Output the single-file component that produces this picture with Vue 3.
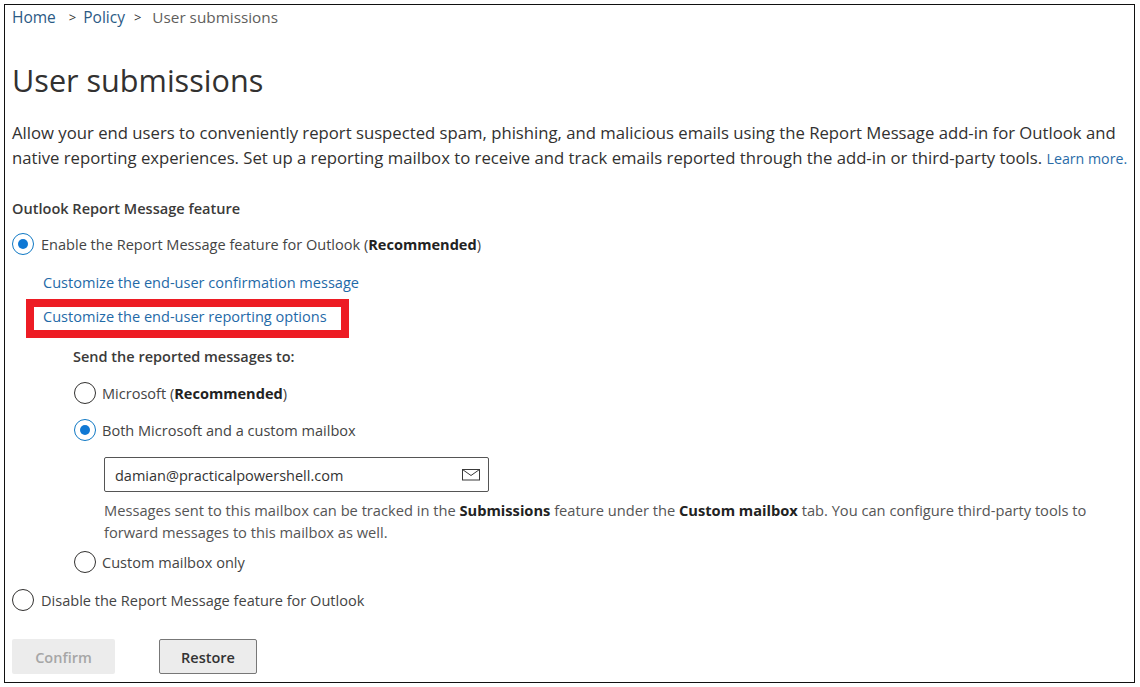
<script setup>
const intro = 'Allow your end users to conveniently report suspected spam, phishing, and malicious emails using the Report Message add-in for Outlook and native reporting experiences. Set up a reporting mailbox to receive and track emails reported through the add-in or third-party tools.'
</script>

<template>
  <div class="frame">
    <nav class="crumbs">
      <span class="crumb">Home</span><span class="sep first">&gt;</span><span class="crumb">Policy</span><span class="sep">&gt;</span><span class="current">User submissions</span>
    </nav>
    <h1 class="title">User submissions</h1>
    <p class="intro">{{ intro }} <a class="learn">Learn more.</a></p>
    <div class="section">Outlook Report Message feature</div>

    <label class="radio top"><span class="dot on"></span><span>Enable the Report Message feature for Outlook (<b>Recommended</b>)</span></label>
    <a class="link confirm-link">Customize the end-user confirmation message</a>
    <div class="red"><a class="link">Customize the end-user reporting options</a></div>

    <div class="nested">
      <div class="send">Send the reported messages to:</div>
      <label class="radio sub r1"><span class="dot"></span><span>Microsoft (<b>Recommended</b>)</span></label>
      <label class="radio sub r2"><span class="dot on"></span><span>Both Microsoft and a custom mailbox</span></label>
      <div class="mailbox">
        <div class="input">
          <span class="email">damian@practicalpowershell.com</span>
          <svg width="18" height="12" viewBox="0 0 18 12" fill="none" stroke="#3a3a3a" stroke-width="1"><rect x="0.5" y="0.5" width="17" height="10.5"/><path d="M0.5 0.5 9 6.5 17.5 0.5"/></svg>
        </div>
        <p class="hint">Messages sent to this mailbox can be tracked in the <b>Submissions</b> feature under the <b>Custom mailbox</b> tab. You can configure third-party tools to forward messages to this mailbox as well.</p>
      </div>
      <label class="radio sub r3"><span class="dot"></span><span>Custom mailbox only</span></label>
    </div>
    <label class="radio r4"><span class="dot"></span><span>Disable the Report Message feature for Outlook</span></label>

    <div class="actions">
      <button class="btn disabled">Confirm</button>
      <button class="btn restore">Restore</button>
    </div>
  </div>
</template>

<style>
html, body { margin: 0; background: #fff; }
</style>

<style scoped>
.frame {
  box-sizing: border-box;
  width: 1131px;
  height: 679px;
  margin: 4px 0 0 4px;
  border: 1px solid #111;
  padding: 0 0 0 7px;
  font-family: "Open Sans", "Noto Sans", sans-serif;
  font-size: 14.5px;
  color: #3b3a39;
  overflow: hidden;
}
.crumbs { display: flex; align-items: center; height: 24px; font-size: 15.5px; }
.crumb { color: #2b5a85; }
.sep { margin: 0 8px 0 9px; font-size: 13px; color: #333; }
.sep.first { margin-left: 13px; margin-right: 7px; }
.current { color: #605e5c; margin-left: 3px; font-size: 15.3px; }
.title { margin: 30px 0 0; font-size: 30.6px; line-height: 42px; font-weight: 400; color: #323130; }
.intro { margin: 19px 0 0; width: 1122px; font-size: 16.72px; line-height: 25px; color: #323130; }
.learn { font-size: 14.2px; color: #2a6ca8; }
.section { margin-top: 27px; height: 20px; line-height: 20px; font-weight: 600; font-size: 14.55px; }
.radio { display: flex; align-items: center; gap: 7px; height: 24px; font-size: 14.55px; color: #444; }
.radio b { color: #222; font-weight: 700; }
.dot {
  box-sizing: border-box; width: 22px; height: 22px; border: 1.5px solid #323130; border-radius: 50%;
  background: #fff; flex: none; display: flex; align-items: center; justify-content: center;
}
.dot.on { border-color: #0f78c4; }
.dot.on::after { content: ""; width: 10px; height: 10px; border-radius: 50%; background: #0f78d4; }
.top { margin-top: 14px; }
.link { display: block; color: #1f6aa8; font-size: 14.55px; line-height: 20px; }
.confirm-link { margin: 16px 0 0 31px; }
.red {
  box-sizing: border-box; width: 323px; height: 39px; margin: 7px 0 0 14px;
  border: 8px solid #ed1c24; padding: 0 0 5px 9px; display: flex; align-items: center;
}
.nested { margin-left: 61px; }
.send { margin-top: 9px; height: 20px; line-height: 20px; font-weight: 600; font-size: 14.5px; }
.sub { margin-left: 1px; gap: 6px; }
.r1 { margin-top: 14px; }
.r2 { margin-top: 13px; }
.mailbox { margin-left: 31px; }
.input {
  box-sizing: border-box; width: 385px; height: 35px; margin-top: 15px; border: 1px solid #555; border-radius: 2px;
  display: flex; align-items: center; justify-content: space-between; padding: 0 8px 0 10px; color: #333; font-size: 14.5px;
}
.email { padding-top: 2px; }
.hint { margin: 7px 0 0; width: 1000px; line-height: 22px; font-size: 14.67px; color: #555; }
.hint b { color: #222; font-weight: 700; }
.r3 { margin-top: 7px; }
.r4 { margin-top: 14px; }
.actions { display: flex; gap: 44px; margin-top: 27px; }
.btn { box-sizing: border-box; height: 35px; font: 600 14.5px "Open Sans", sans-serif; border-radius: 2px; padding: 2px 0 0; }
.disabled { width: 103px; border: none; background: #ececec; color: #a6a6a6; }
.restore { width: 98px; border: 1px solid #777; background: #ececec; color: #333; }
</style>
